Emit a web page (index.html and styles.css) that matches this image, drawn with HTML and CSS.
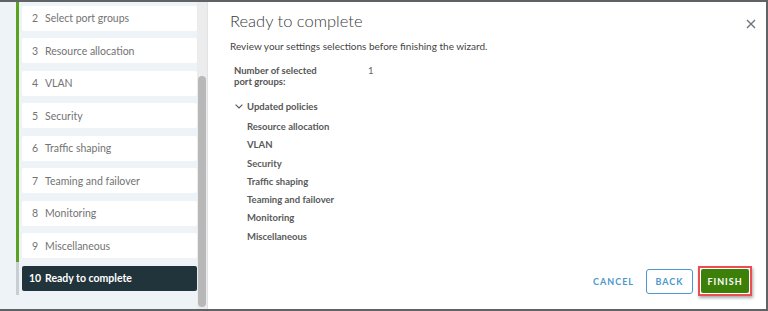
FILE: index.html
```html
<!DOCTYPE html>
<html>
<head>
<meta charset="utf-8">
<link rel="stylesheet" href="styles.css">
</head>
<body>
<div class="frame">
  <aside class="sidebar">
    <ol class="steps">
      <li class="step"><span class="box"><span class="num">2</span>Select port groups</span></li>
      <li class="step"><span class="box"><span class="num">3</span>Resource allocation</span></li>
      <li class="step"><span class="box"><span class="num">4</span>VLAN</span></li>
      <li class="step"><span class="box"><span class="num">5</span>Security</span></li>
      <li class="step"><span class="box"><span class="num">6</span>Traffic shaping</span></li>
      <li class="step"><span class="box"><span class="num">7</span>Teaming and failover</span></li>
      <li class="step"><span class="box"><span class="num">8</span>Monitoring</span></li>
      <li class="step"><span class="box"><span class="num">9</span>Miscellaneous</span></li>
      <li class="step current"><span class="box"><span class="num">10</span>Ready to complete</span></li>
    </ol>
    <div class="scrollbar"><div class="thumb"></div></div>
  </aside>
  <main class="content">
    <header class="head">
      <h1 class="title">Ready to complete</h1>
      <button class="close" aria-label="Close">
        <svg width="10" height="10" viewBox="0 0 10 10"><path d="M1 1 L9 9 M9 1 L1 9" stroke="#6f7479" stroke-width="1.4" fill="none"/></svg>
      </button>
    </header>
    <p class="intro">Review your settings selections before finishing the wizard.</p>
    <div class="summary">
      <div class="label">Number of selected<br>port groups:</div>
      <div class="value">1</div>
    </div>
    <div class="policies">
      <div class="toggle">
        <svg width="8" height="5" viewBox="0 0 8 5"><path d="M0.6 0.6 L4 4 L7.4 0.6" stroke="#555" stroke-width="1.1" fill="none"/></svg>
        <span>Updated policies</span>
      </div>
      <ul class="plist">
        <li>Resource allocation</li>
        <li>VLAN</li>
        <li>Security</li>
        <li>Traffic shaping</li>
        <li>Teaming and failover</li>
        <li>Monitoring</li>
        <li>Miscellaneous</li>
      </ul>
    </div>
    <footer class="actions">
      <button class="btn link">CANCEL</button>
      <button class="btn outline">BACK</button>
      <span class="highlight"><button class="btn primary">FINISH</button></span>
    </footer>
  </main>
</div>
</body>
</html>
```
FILE: styles.css
```css
* { box-sizing: border-box; }
html, body { margin: 0; padding: 0; }
body {
  width: 768px;
  height: 311px;
  overflow: hidden;
  background: #fff;
  font-family: Lato, "Open Sans", sans-serif;
}
.frame {
  display: flex;
  width: 768px;
  height: 311px;
  border-top: 2px solid #5f6366;
  border-bottom: 2px solid #5f6366;
  border-right: 2px solid #5f6366;
  overflow: hidden;
}
.sidebar {
  display: flex;
  width: 208px;
  flex: none;
  background: #eef3f7;
}
.steps {
  list-style: none;
  margin: 0;
  padding: 0 0 0 16px;
  width: 197px;
}
.step {
  border-left: 3px solid #5aa220;
  padding: 3.5px 0 4px 3px;
  height: 32.5px;
}
.step.current { border-left-color: #c9ced2; }
.box {
  display: flex;
  align-items: center;
  height: 25px;
  background: #fff;
  border-radius: 2px;
  color: #737373;
  font-size: 10.5px;
  padding-left: 10px;
}
.num { width: 13px; flex: none; }
.current .box {
  background: #21333b;
  color: #fff;
  font-weight: 700;
  padding-left: 7px;
}
.current .num { width: 16px; }
.scrollbar {
  width: 11px;
  flex: none;
  background: #ececec;
  border-right: 1px solid #dfe3e5;
  padding: 74px 1px 2px 1px;
}
.thumb {
  height: 100%;
  background: #b8b8b8;
  border-radius: 4px;
}
.content {
  flex: 1;
  display: flex;
  flex-direction: column;
  padding: 0 0 0 22px;
  position: relative;
}
.head {
  display: flex;
  justify-content: space-between;
  align-items: center;
  height: 38px;
  padding-right: 10px;
}
.title {
  margin: 0;
  font-size: 16.5px;
  font-weight: 300;
  color: #3a3a3a;
}
.close {
  border: 0;
  background: none;
  padding: 0;
  display: flex;
  margin-top: 5px;
}
.intro {
  margin: 0;
  font-size: 10px;
  color: #444;
}
.summary {
  display: flex;
  margin-top: 14px;
  padding-left: 4px;
  font-size: 9.5px;
  line-height: 10.5px;
  color: #555;
}
.label { width: 134px; font-weight: 700; }
.value { color: #666; }
.policies { margin-top: 14px; padding-left: 5px; }
.toggle {
  display: flex;
  align-items: center;
  gap: 4px;
  font-size: 9.5px;
  font-weight: 700;
  color: #555;
}
.plist {
  list-style: none;
  margin: 6px 0 0 0;
  padding: 0 0 0 12px;
  font-size: 9.5px;
  font-weight: 700;
  color: #5a5a5a;
}
.plist li { height: 18.3px; line-height: 18.3px; }
.actions {
  position: absolute;
  right: 14px;
  bottom: 13px;
  display: flex;
  align-items: center;
}
.btn {
  font-family: inherit;
  font-size: 9px;
  font-weight: 700;
  letter-spacing: 1px;
  height: 25px;
  border-radius: 3px;
  padding: 0 11px;
  cursor: pointer;
}
.link {
  background: none;
  border: 0;
  color: #4a98cd;
  margin-right: 1px;
}
.outline {
  background: #fff;
  border: 1px solid #4a98cd;
  color: #4a98cd;
  width: 47px;
  padding: 0;
  margin-right: 5px;
}
.highlight {
  display: flex;
  border: 2px solid #ec4d55;
  padding: 1px;
  box-shadow: 1px 2px 3px rgba(0,0,0,0.35);
}
.primary {
  background: #3c8009;
  border: 0;
  color: #fff;
  width: 48px;
  height: 24px;
  padding: 0;
  border-radius: 2px;
}
```
